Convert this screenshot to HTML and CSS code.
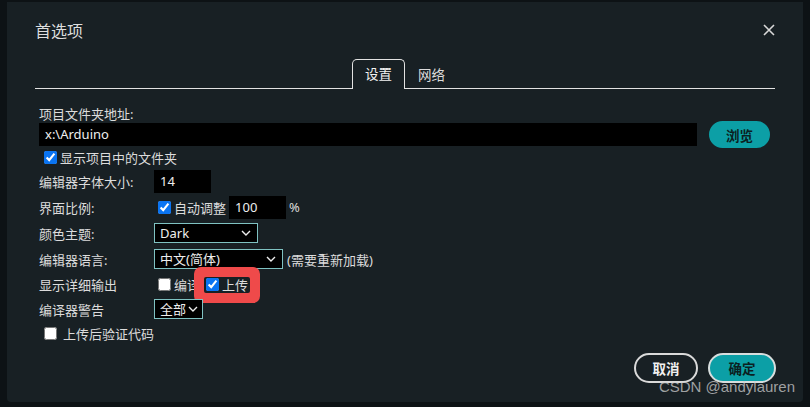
FILE: index.html
```html
<!DOCTYPE html>
<html lang="zh">
<head>
  <meta charset="UTF-8">
  <title>首选项</title>
  <link rel="stylesheet" href="styles.css">
</head>
<body>
  <div class="dialog">
    <div class="dialog-header">
      <span class="dialog-title">首选项</span>
      <svg class="close" width="12" height="12" viewBox="0 0 12 12"><path d="M1 1L11 11M11 1L1 11" stroke="#d8d8d8" stroke-width="1.6"/></svg>
    </div>

    <div class="tabs">
      <div class="tab active">设置</div>
      <div class="tab">网络</div>
    </div>

    <div class="settings">
      <div class="row label-row">项目文件夹地址:</div>
      <div class="row path-row">
        <div class="text-box path">x:\Arduino</div>
        <button class="btn btn-teal browse">浏览</button>
      </div>
      <label class="row check-row"><input type="checkbox" checked> 显示项目中的文件夹</label>

      <div class="row field h26">
        <span class="field-label">编辑器字体大小:</span>
        <div class="text-box small">14</div>
      </div>
      <div class="row field h26">
        <span class="field-label">界面比例:</span>
        <label class="inline-check"><input type="checkbox" checked> 自动调整</label>
        <div class="text-box small">100</div>
        <span class="unit">%</span>
      </div>
      <div class="row field h26">
        <span class="field-label">颜色主题:</span>
        <div class="select w104">Dark<svg width="10" height="6" viewBox="0 0 10 6"><path d="M1 1l4 4 4-4" fill="none" stroke="#eee" stroke-width="1.4"/></svg></div>
      </div>
      <div class="row field h26">
        <span class="field-label">编辑器语言:</span>
        <div class="select w129">中文(简体)<svg width="10" height="6" viewBox="0 0 10 6"><path d="M1 1l4 4 4-4" fill="none" stroke="#eee" stroke-width="1.4"/></svg></div>
        <span class="note">(需要重新加载)</span>
      </div>
      <div class="row field h25">
        <span class="field-label">显示详细输出</span>
        <label class="inline-check"><input type="checkbox"> 编译</label><span class="highlight"><label class="inline-check"><input type="checkbox" checked> 上传</label></span>
      </div>
      <div class="row field h24">
        <span class="field-label">编译器警告</span>
        <div class="select w49">全部<svg width="10" height="6" viewBox="0 0 10 6"><path d="M1 1l4 4 4-4" fill="none" stroke="#eee" stroke-width="1.4"/></svg></div>
      </div>
      <label class="row check-row verify"><input type="checkbox"> 上传后验证代码</label>
    </div>

    <div class="dialog-footer">
      <button class="btn btn-outline">取消</button>
      <button class="btn btn-teal ok">确定</button>
    </div>

    <div class="watermark">CSDN @andylauren</div>
  </div>
</body>
</html>
```

FILE: styles.css
```css
body {
  margin: 0;
  padding: 2px 0 0 7px;
  height: 407px;
  box-sizing: border-box;
  overflow: hidden;
  background-color: #0d1215;
  font-family: "Noto Sans", "Noto Sans CJK SC", sans-serif;
  font-size: 13px;
  color: #dcdcdc;
}

.dialog {
  position: relative;
  width: 796px;
  height: 400px;
  box-sizing: border-box;
  padding: 0 28px;
  background-color: #182024;
  border-radius: 0 0 4px 4px;
  display: flex;
  flex-direction: column;
}

.dialog-header {
  height: 56px;
  display: flex;
  justify-content: space-between;
  align-items: center;
}

.dialog-title {
  font-size: 16px;
  color: #dedede;
}

.tabs {
  height: 30px;
  display: flex;
  justify-content: center;
  align-items: flex-end;
  border-bottom: 1px solid #e2e2e2;
}

.tab {
  height: 28px;
  line-height: 28px;
  padding: 0 12px;
  font-size: 13.5px;
  color: #dcdcdc;
  border: 1px solid transparent;
  border-bottom: none;
  margin-bottom: -1px;
}

.tab.active {
  border-color: #e2e2e2;
  border-radius: 5px 5px 0 0;
  background-color: #182024;
  height: 29px;
  color: #f2f2f2;
}

.settings {
  padding: 14px 0 0 4px;
  display: flex;
  flex-direction: column;
}

.row {
  display: flex;
  align-items: center;
}

.label-row {
  height: 20px;
}

.path-row {
  height: 23px;
}

.text-box {
  background-color: #000;
  height: 23px;
  line-height: 23px;
  box-sizing: border-box;
  padding: 0 6px;
  color: #eee;
}

.path {
  width: 658px;
}

.small {
  width: 57px;
}

.btn {
  font-family: inherit;
  font-size: 13.5px;
  border-radius: 16px;
  cursor: pointer;
  padding: 0;
}

.btn-teal {
  background-color: #0c9fa6;
  color: #0b1f22;
  border: none;
}

.browse {
  width: 61px;
  height: 27px;
  margin-left: 12px;
  flex-shrink: 0;
  font-weight: 600;
}

.check-row {
  height: 22px;
  padding-left: 5px;
}

.check-row input,
.inline-check input {
  width: 13px;
  height: 13px;
  margin: 0 3px 0 0;
  accent-color: #0a74f2;
}

.field-label {
  width: 115px;
  flex-shrink: 0;
}

.h24 { height: 24px; }
.h25 { height: 25px; }
.h26 { height: 26px; }

.field .inline-check {
  display: inline-flex;
  align-items: center;
  margin-left: 4px;
}

.field .text-box + .unit {
  margin-left: 3px;
}

.field .inline-check + .text-box {
  margin-left: 3px;
}

.select {
  height: 20px;
  box-sizing: border-box;
  border: 1px solid #7fc2c2;
  background-color: #000;
  color: #eee;
  display: flex;
  align-items: center;
  justify-content: space-between;
  padding: 0 6px 0 5px;
  line-height: 18px;
}

.w104 { width: 104px; }
.w129 { width: 129px; }
.w49 { width: 49px; padding-right: 4px; }

.note {
  margin-left: 4px;
}

.highlight {
  display: inline-flex;
  align-items: center;
  height: 16px;
  padding: 0 2px;
  margin-left: 4px;
  border-radius: 2px;
  background-color: #182024;
  box-shadow: 0 0 0 10px #ef4a4a;
}

.highlight .inline-check {
  margin-left: 0;
}

.verify {
  height: 25px;
}

.verify input {
  margin-right: 6px;
}

.dialog-footer {
  margin-top: auto;
  margin-right: -1px;
  padding-bottom: 19px;
  display: flex;
  justify-content: flex-end;
  gap: 10px;
}

.btn-outline {
  width: 64px;
  height: 30px;
  background-color: #182024;
  border: 2px solid #dadada;
  color: #f0f0f0;
  font-weight: bold;
}

.ok {
  width: 68px;
  height: 30px;
  border: 2px solid #d8dede;
  font-weight: bold;
}

.watermark {
  position: absolute;
  right: 8px;
  bottom: 7px;
  font-family: "Liberation Sans", sans-serif;
  font-size: 15px;
  color: rgba(205, 205, 205, 0.75);
  pointer-events: none;
}
```
